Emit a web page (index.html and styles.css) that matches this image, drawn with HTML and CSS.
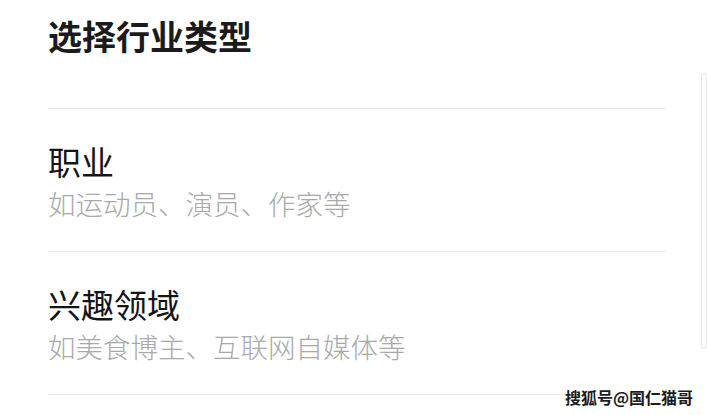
FILE: index.html
```html
<!DOCTYPE html>
<html lang="zh-CN">
<head>
  <meta charset="UTF-8" />
  <meta name="viewport" content="width=device-width, initial-scale=1.0"/>
  <title>选择行业类型</title>
  <link rel="stylesheet" href="styles.css">
</head>
<body>
  <div class="page">
    <div class="sheet">
      <h1 class="title">选择行业类型</h1>

      <!-- 行业列表 -->
      <ul class="types">
        <li class="type">
          <div class="type-name">职业</div>
          <div class="type-desc">如运动员、演员、作家等</div>
        </li>
        <li class="type">
          <div class="type-name">兴趣领域</div>
          <div class="type-desc">如美食博主、互联网自媒体等</div>
        </li>
      </ul>
    </div>

    <div class="side-card"></div>
  </div>

  <div class="watermark">搜狐号@国仁猫哥</div>
</body>
</html>
```

FILE: styles.css
```css
* { box-sizing: border-box; }
body {
  font-family: "Noto Sans CJK SC", "Noto Sans", sans-serif;
  margin: 0;
  background: #fff;
  color: #1b1b1b;
  overflow: hidden;
}
.page {
  display: flex;
  height: 415px;
}
.sheet {
  width: 666px;
  padding-left: 48px;
  flex-shrink: 0;
}
.title {
  margin: 0;
  height: 109px;
  padding-top: 15px;
  font-size: 34px;
  line-height: 42px;
  font-weight: 700;
  border-bottom: 1px solid #e8e8e8;
}
.types {
  list-style: none;
  margin: 0;
  padding: 0;
}
.type {
  height: 143px;
  padding-top: 32px;
  border-bottom: 1px solid #ebebeb;
}
.type-name {
  font-size: 33px;
  line-height: 40px;
  font-weight: 400;
  color: #151515;
}
.type-desc {
  margin-top: 4px;
  font-size: 27.5px;
  line-height: 36px;
  font-weight: 300;
  color: #a9a9a9;
}
.side-card {
  margin-left: 35px;
  margin-top: 73px;
  width: 30px;
  height: 276px;
  border: 1px solid #e6e6e6;
  border-radius: 6px;
}
.watermark {
  position: absolute;
  right: 14px;
  bottom: 8px;
  font-size: 16px;
  line-height: 20px;
  font-weight: 700;
  color: #1c1c1c;
  text-shadow: 0 0 2px #fff, 0 0 2px #fff;
}
```
